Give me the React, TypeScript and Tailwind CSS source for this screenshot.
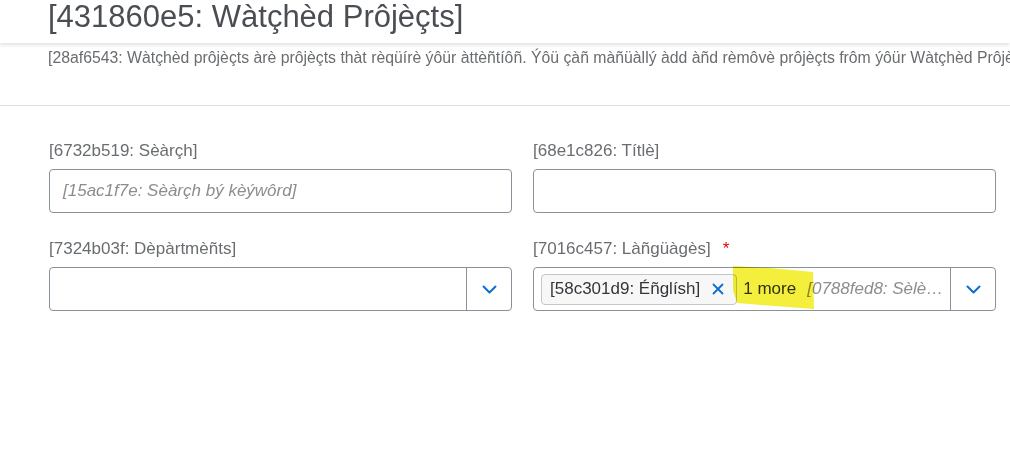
import React from "react";

function Chevron() {
  return (
    <svg width="15" height="9" viewBox="0 0 15 9" fill="none">
      <path d="M1.5 1.5l6 6 6-6" stroke="#0a6ed1" strokeWidth="2" strokeLinecap="round" strokeLinejoin="round" />
    </svg>
  );
}

function Label({ text, required }: { text: string; required?: boolean }) {
  return (
    <div className="h-5 leading-5 text-[17px] text-[#6a6d70] mb-2 whitespace-nowrap">
      {text}
      {required && <span className="text-[#e00] ml-[12px]">*</span>}
    </div>
  );
}

function TextField({ placeholder }: { placeholder?: string }) {
  return (
    <div className="h-[44px] border border-[#89919a] rounded-[4px] bg-white flex items-center px-[13px]">
      <span className="italic text-[17px] text-[#8b8e91] whitespace-nowrap">{placeholder}</span>
    </div>
  );
}

function SelectField({ children }: { children?: React.ReactNode }) {
  return (
    <div className="h-[44px] border border-[#89919a] rounded-[4px] bg-white flex items-stretch">
      <div className="flex-1 min-w-0 flex items-center">{children}</div>
      <div className="w-[45px] border-l border-[#89919a] flex items-center justify-center">
        <Chevron />
      </div>
    </div>
  );
}

export default function App() {
  return (
    <div className="w-[1010px] h-[474px] bg-white overflow-hidden relative" style={{ fontFamily: '"Liberation Sans", Arial, sans-serif' }}>
      <div className="h-[43px] bg-white shadow-[0_2px_4px_rgba(0,0,0,0.12)] relative z-10 pl-[48px]">
        <h1 className="text-[31px] leading-[33px] text-[#4a4e53] whitespace-nowrap">[431860e5: Wàtçhèd Prôjèçts]</h1>
      </div>
      <div className="pl-[48px] pt-[5px] pb-[37px] border-b border-[#e1e1e1]">
        <p className="text-[15.8px] leading-5 text-[#6a6d70] whitespace-nowrap">
          [28af6543: Wàtçhèd prôjèçts àrè prôjèçts thàt rèqüírè ýôür àttèñtíôñ. Ýôü çàñ màñüàllý àdd àñd rèmôvè prôjèçts frôm ýôür Wàtçhèd Prôjèçts lìst.]
        </p>
      </div>
      <div className="pl-[49px] pt-[35px] grid grid-cols-[463px_463px] gap-x-[21px]">
        <div>
          <Label text="[6732b519: Sèàrçh]" />
          <TextField placeholder="[15ac1f7e: Sèàrçh bý kèýwôrd]" />
        </div>
        <div>
          <Label text="[68e1c826: Títlè]" />
          <TextField />
        </div>
        <div className="mt-[26px]">
          <Label text="[7324b03f: Dèpàrtmèñts]" />
          <SelectField />
        </div>
        <div className="mt-[26px]">
          <Label text="[7016c457: Làñgüàgès]" required />
          <SelectField>
            <div className="flex items-center pl-[7px] pr-[5px] min-w-0 w-full text-[17px]">
              <div className="h-[31px] shrink-0 flex items-center border border-[#c6c6c6] bg-[#f7f7f7] rounded-[4px] pl-[8px] pr-[12px]">
                <span className="text-[#32363a] whitespace-nowrap">[58c301d9: Éñglísh]</span>
                <svg className="ml-[12px]" width="12" height="12" viewBox="0 0 12 12" fill="none">
                  <path d="M1.5 1.5l9 9M10.5 1.5l-9 9" stroke="#0a6ed1" strokeWidth="1.8" strokeLinecap="round" />
                </svg>
              </div>
              <span className="ml-[6px] shrink-0 text-[#32363a] whitespace-nowrap">1 more</span>
              <span className="ml-[11px] min-w-0 truncate italic text-[#8b8e91]">[0788fed8: Sèlèçt làñgüàgès]</span>
            </div>
          </SelectField>
        </div>
      </div>
      <svg className="absolute left-0 top-0 pointer-events-none mix-blend-multiply" width="1010" height="474">
        <polygon points="733,266 770,268 813,272 814,309 775,306 737,303 733,290" fill="#f4ef3c" />
      </svg>
    </div>
  );
}
